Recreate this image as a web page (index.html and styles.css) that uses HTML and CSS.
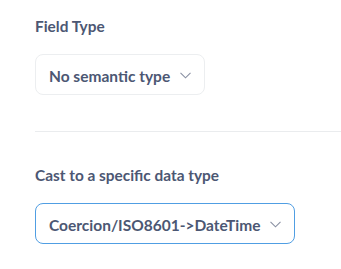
FILE: index.html
```html
<!DOCTYPE html>
<html>
<head>
<meta charset="utf-8">
<link rel="stylesheet" href="styles.css">
</head>
<body>
<div class="panel">
  <section class="section">
    <div class="label">Field Type</div>
    <div class="select">
      <span class="value">No semantic type</span>
      <svg class="chev" width="11" height="7" viewBox="0 0 11 7"><path d="M0.5 0.8 L5.5 5.8 L10.5 0.8" fill="none" stroke="currentColor" stroke-width="1.1"/></svg>
    </div>
  </section>
  <hr class="divider">
  <section class="section">
    <div class="label">Cast to a specific data type</div>
    <div class="select active">
      <span class="value">Coercion/ISO8601-&gt;DateTime</span>
      <svg class="chev" width="11" height="7" viewBox="0 0 11 7"><path d="M0.5 0.8 L5.5 5.8 L10.5 0.8" fill="none" stroke="currentColor" stroke-width="1.1"/></svg>
    </div>
  </section>
</div>
</body>
</html>
```
FILE: styles.css
```css
html, body {
  margin: 0;
  padding: 0;
  background: #ffffff;
}
body {
  font-family: Lato, "Noto Sans", sans-serif;
  color: #4c5773;
}
.panel {
  padding: 17px 0 0 35px;
}
.section {
  display: flex;
  flex-direction: column;
  align-items: flex-start;
}
.label {
  font-size: 15.4px;
  font-weight: 700;
  line-height: 18px;
  margin-bottom: 19px;
}
.select {
  display: inline-flex;
  align-items: center;
  box-sizing: border-box;
  height: 41px;
  padding: 0 13px 0 13px;
  border: 1px solid #eceef0;
  border-radius: 8px;
  font-size: 15.5px;
  font-weight: 700;
}
.select.active {
  border-color: #509ee3;
}
.value {
  line-height: 18px;
  padding-top: 3px;
}
.chev {
  margin-left: 10px;
  color: #8a91a3;
  margin-top: 1px;
}
.divider {
  border: 0;
  height: 1px;
  background: #eaecee;
  margin: 36px 0 34px 0;
}
```
